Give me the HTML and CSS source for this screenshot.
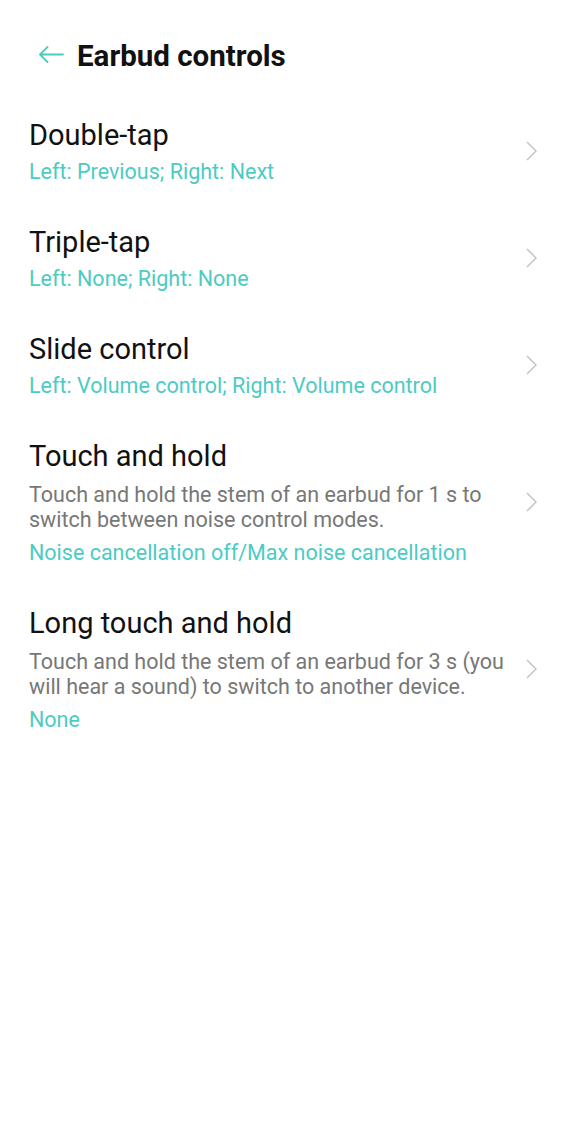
FILE: index.html
```html
<!DOCTYPE html>
<html>

<head>
    <title>Earbud controls</title>
    <link rel="stylesheet" href="styles.css">
</head>

<body>
    <div class="header">
        <svg class="back" width="26" height="17" viewBox="0 0 26 17">
            <path d="M25 8.5H2M9.5 1L2 8.5L9.5 16" fill="none" stroke="#4ccbc3" stroke-width="1.8" stroke-linecap="round" stroke-linejoin="round"/>
        </svg>
        <h1>Earbud controls</h1>
    </div>

    <div class="list">
        <div class="row">
            <div class="text">
                <div class="title">Double-tap</div>
                <div class="value">Left: Previous; Right: Next</div>
            </div>
            <svg class="chevron" width="11" height="20" viewBox="0 0 11 20"><path d="M1 1L10 10L1 19" fill="none" stroke="#c4c4c4" stroke-width="1.5"/></svg>
        </div>
        <div class="row">
            <div class="text">
                <div class="title">Triple-tap</div>
                <div class="value">Left: None; Right: None</div>
            </div>
            <svg class="chevron" width="11" height="20" viewBox="0 0 11 20"><path d="M1 1L10 10L1 19" fill="none" stroke="#c4c4c4" stroke-width="1.5"/></svg>
        </div>
        <div class="row">
            <div class="text">
                <div class="title">Slide control</div>
                <div class="value">Left: Volume control; Right: Volume control</div>
            </div>
            <svg class="chevron" width="11" height="20" viewBox="0 0 11 20"><path d="M1 1L10 10L1 19" fill="none" stroke="#c4c4c4" stroke-width="1.5"/></svg>
        </div>
        <div class="row">
            <div class="text">
                <div class="title">Touch and hold</div>
                <div class="desc">Touch and hold the stem of an earbud for 1 s to switch between noise control modes.</div>
                <div class="value after-desc">Noise cancellation off/Max noise cancellation</div>
            </div>
            <svg class="chevron" width="11" height="20" viewBox="0 0 11 20"><path d="M1 1L10 10L1 19" fill="none" stroke="#c4c4c4" stroke-width="1.5"/></svg>
        </div>
        <div class="row">
            <div class="text">
                <div class="title">Long touch and hold</div>
                <div class="desc">Touch and hold the stem of an earbud for 3 s (you will hear a sound) to switch to another device.</div>
                <div class="value after-desc">None</div>
            </div>
            <svg class="chevron" width="11" height="20" viewBox="0 0 11 20"><path d="M1 1L10 10L1 19" fill="none" stroke="#c4c4c4" stroke-width="1.5"/></svg>
        </div>
    </div>
</body>

</html>
```

FILE: styles.css
```css
body {
    margin: 0;
    font-family: Roboto, "Liberation Sans", sans-serif;
    background-color: #fff;
    color: #000;
}

.header {
    display: flex;
    align-items: center;
    padding: 38px 0 23px 38px;
}

.back {
    margin-right: 13px;
    margin-bottom: 4px;
}

h1 {
    margin: 0;
    font-size: 29.5px;
    font-weight: 700;
    line-height: 36px;
    color: #111;
}

.row {
    display: flex;
    align-items: center;
    padding: 20px 39px 20px 29px;
}

.text {
    flex: 1;
}

.chevron {
    margin-left: 14px;
    flex-shrink: 0;
}

.title {
    font-size: 29px;
    line-height: 36px;
    color: #111;
}

.value,
.desc {
    font-size: 21.5px;
    line-height: 25px;
}

.value {
    margin-top: 6px;
    color: #4ccbc3;
}

.desc {
    margin-top: 8px;
    color: #777;
}

.value.after-desc {
    margin-top: 8px;
}
```
